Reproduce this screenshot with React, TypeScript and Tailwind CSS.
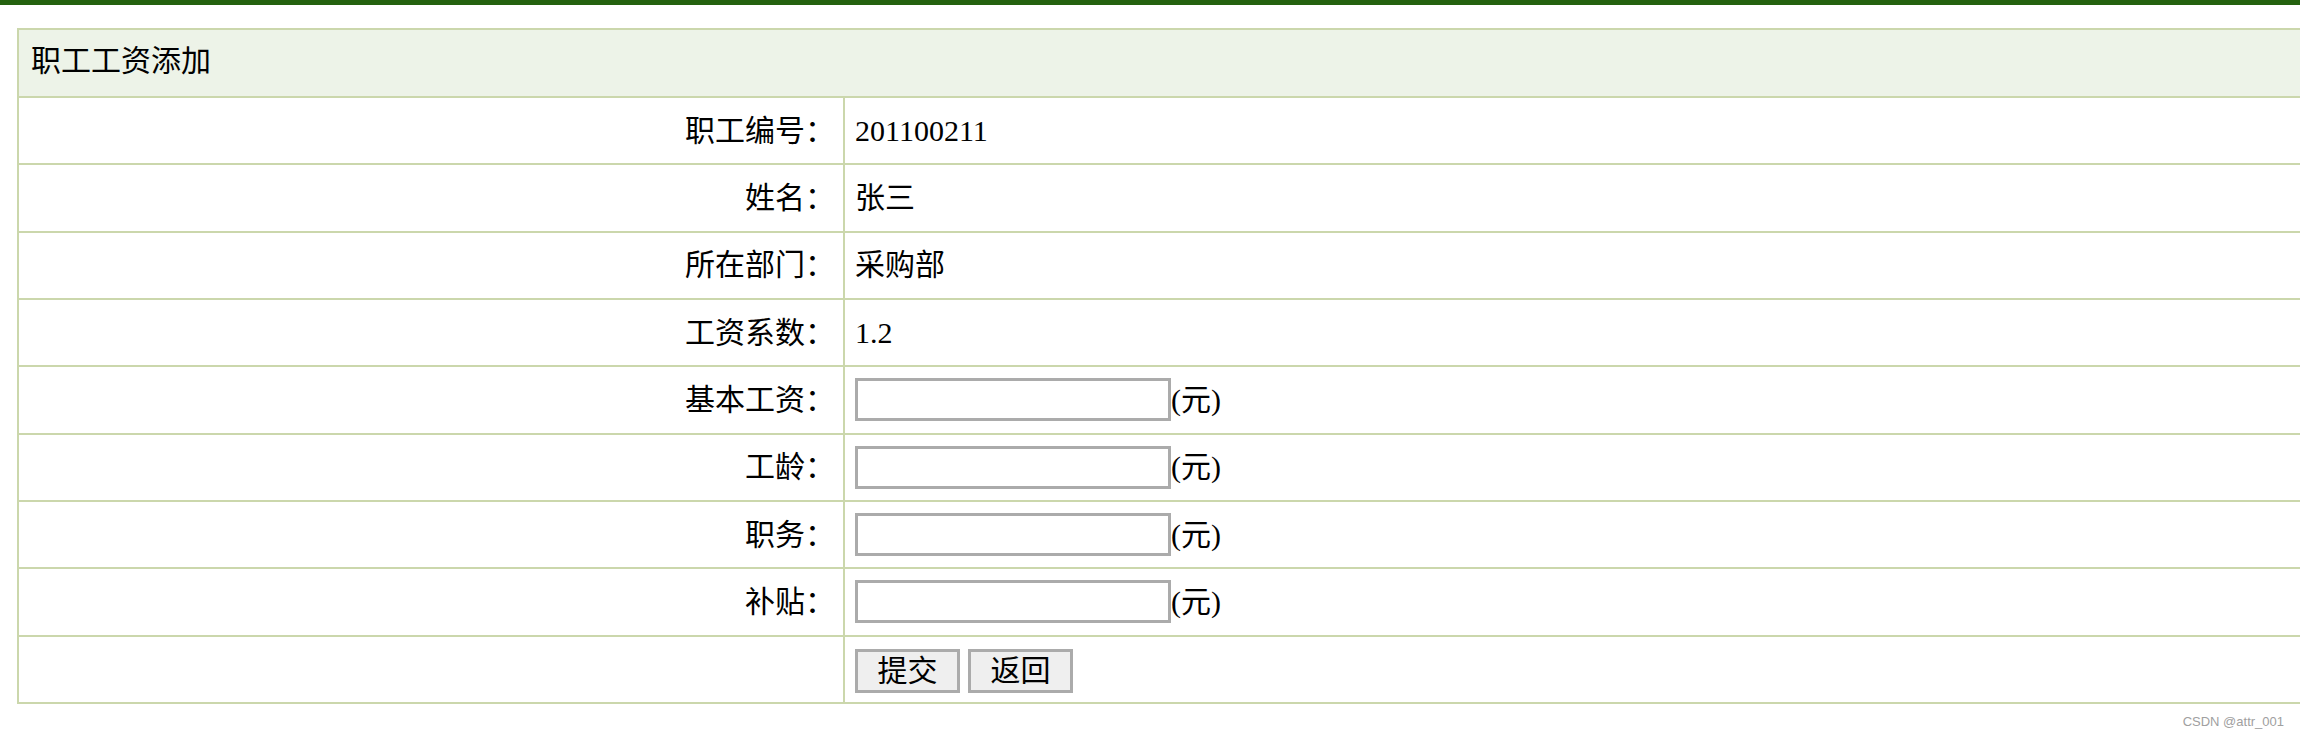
import React from "react";

// Salary entry form: fixed labels on the left, values / inputs on the right
interface InfoRow {
  label: string;
  value: string;
}

const infoRows: InfoRow[] = [
  { label: "职工编号：", value: "201100211" },
  { label: "姓名：", value: "张三" },
  { label: "所在部门：", value: "采购部" },
  { label: "工资系数：", value: "1.2" },
];

const inputRows = ["基本工资：", "工龄：", "职务：", "补贴："];

function Row({ label, children }: { label: string; children?: React.ReactNode }) {
  return (
    <div className="flex h-[67.33px] border-b-2 border-[#cbd7ac]">
      <div className="w-[826px] shrink-0 border-r-2 border-[#cbd7ac] flex items-center justify-end pr-[8px]">
        {label}
      </div>
      <div className="flex-1 flex items-center pl-[10px]">{children}</div>
    </div>
  );
}

export default function App() {
  return (
    <div
      className="relative h-[738px] w-full overflow-hidden bg-white text-black text-[30px] leading-none"
      style={{ fontFamily: '"Liberation Serif", "Noto Sans CJK SC", serif' }}
    >
      <div className="h-[5px] bg-[#24620f]" />

      <div className="mt-[23px] ml-[17px] border-l-2 border-t-2 border-[#cbd7ac]">
        {/* Header */}
        <div className="h-[68px] bg-[#edf3e8] border-b-2 border-[#cbd7ac] flex items-center pl-[12px] pb-[4px]">
          职工工资添加
        </div>

        {infoRows.map((row) => (
          <Row key={row.label} label={row.label}>
            <span>{row.value}</span>
          </Row>
        ))}

        {inputRows.map((label) => (
          <Row key={label} label={label}>
            <input
              type="text"
              className="w-[316px] h-[43px] border-[3px] border-[#ababab] bg-white outline-none"
            />
            <span>(元)</span>
          </Row>
        ))}

        <Row label="">
          <div className="flex gap-[8px] pt-[4px]">
            <button className="w-[105px] h-[44px] border-[3px] border-[#ababab] bg-[#efefef] text-[30px] leading-none">
              提交
            </button>
            <button className="w-[105px] h-[44px] border-[3px] border-[#ababab] bg-[#efefef] text-[30px] leading-none">
              返回
            </button>
          </div>
        </Row>
      </div>

      {/* Watermark */}
      <div
        className="absolute right-[16px] top-[715px] text-[13px] text-[#a0a0a0]"
        style={{ fontFamily: '"Liberation Sans", Arial, sans-serif' }}
      >
        CSDN @attr_001
      </div>
    </div>
  );
}
